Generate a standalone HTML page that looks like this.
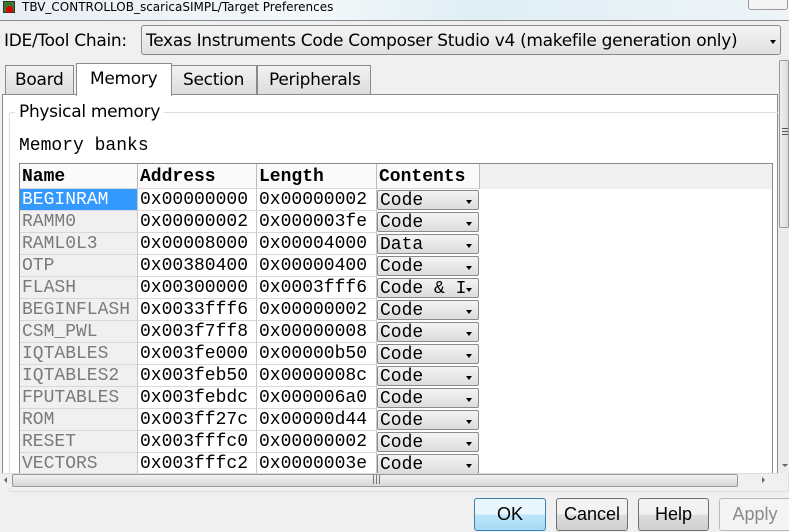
<!DOCTYPE html>
<html><head><meta charset="utf-8"><style>
*{margin:0;padding:0;box-sizing:border-box}
body{width:789px;height:532px;overflow:hidden;background:#f0f0f0;font-family:"DejaVu Sans","Liberation Sans",sans-serif;position:relative;color:#000}
.a{position:absolute}
.ui{font-size:17px;letter-spacing:-0.3px}
.mono{font-family:"Liberation Mono",monospace;font-size:18px}
.cell{position:absolute;height:22px;border-right:1px solid #c8c8c8;border-bottom:1px solid #d8d8d8;padding-left:2px;line-height:23px;white-space:nowrap;overflow:hidden}
.dd{position:absolute;height:20px;width:102px;border:1px solid #8a8a8a;border-radius:2px;background:linear-gradient(#f4f4f4,#dcdcdc);padding-left:2px;line-height:20px;font-family:"Liberation Mono",monospace;font-size:18px;white-space:nowrap;overflow:hidden}
.dd:after{content:"";position:absolute;right:6px;top:9px;border-left:3.5px solid transparent;border-right:3.5px solid transparent;border-top:4px solid #000}
.btn{position:absolute;top:498px;height:33px;border:1px solid #707070;border-radius:3px;background:linear-gradient(#f2f2f2 50%,#dddddd 50%,#cfcfcf);text-align:center;line-height:31px;font-size:18px;font-family:"Liberation Sans",sans-serif}
</style></head><body>
<div class="a" style="left:0;top:0;width:789px;height:20px;background:linear-gradient(90deg,#e8eef4,#f4f8fa 40%,#dfeef4 60%,#eef4f8);"></div>
<div class="a" style="left:3px;top:1px;width:12px;height:12px;background:#3a7a2a;border:1px solid #333"><div class="a" style="left:2px;top:4px;width:7px;height:7px;border-radius:50%;background:#d00"></div></div>
<div class="a" style="left:22px;top:0;font-size:12px;font-family:'DejaVu Sans',sans-serif;line-height:14px">TBV_CONTROLLOB_scaricaSIMPL/Target Preferences</div>
<div class="a" style="left:748px;top:-4px;width:40px;height:14px;border:1px solid #999;border-radius:3px;background:#f4f4f4"></div>
<div class="a" style="left:0;top:20px;width:789px;height:1px;background:#8a8a8a"></div>
<div class="a ui" style="left:4px;top:31px">IDE/Tool Chain:</div>
<div class="a" style="left:141px;top:25px;width:640px;height:30px;border:1px solid #8a8a8a;border-radius:3px;background:linear-gradient(#f5f5f5,#e0e0e0)"></div>
<div class="a ui" style="left:146px;top:31px">Texas Instruments Code Composer Studio v4 (makefile generation only)</div>
<div class="a" style="left:770px;top:40px;border-left:3px solid transparent;border-right:3px solid transparent;border-top:4px solid #000"></div>
<div class="a" style="left:5px;top:65px;width:69px;height:30px;border:1px solid #8a8a8a;border-bottom:none;background:linear-gradient(#f2f2f2,#dcdcdc)"></div>
<div class="a ui" style="left:15px;top:70px">Board</div>
<div class="a" style="left:257px;top:65px;width:114px;height:30px;border:1px solid #8a8a8a;border-bottom:none;background:linear-gradient(#f2f2f2,#dcdcdc)"></div>
<div class="a" style="left:171px;top:65px;width:86px;height:30px;border:1px solid #8a8a8a;border-bottom:none;background:linear-gradient(#f2f2f2,#dcdcdc)"></div>
<div class="a ui" style="left:183px;top:70px">Section</div>
<div class="a ui" style="left:269px;top:70px">Peripherals</div>
<div class="a" style="left:2px;top:94px;width:776px;height:380px;border:1px solid #8a8a8a;background:#fff"></div>
<div class="a" style="left:76px;top:63px;width:96px;height:33px;border:1px solid #8a8a8a;border-bottom:none;background:#fff"></div>
<div class="a ui" style="left:90px;top:69px">Memory</div>
<div class="a" style="left:9px;top:112px;width:780px;height:380px;border:1px solid #d5dfe5;border-radius:3px"></div>
<div class="a ui" style="left:15px;top:102px;background:#fff;padding:0 4px">Physical memory</div>
<div class="a mono" style="left:19px;top:136px">Memory banks</div>
<div class="a" style="left:19px;top:163px;width:754px;height:310px;border:1px solid #8a8a8a;border-bottom:none;background:#fff;overflow:hidden">
<div class="a" style="left:0;top:0;width:754px;height:25px;background:#f0f0f0"></div>
<div id="t"></div>
</div>
<script>
var h=[["Name",0,118],["Address",118,119],["Length",237,120],["Contents",357,103]];
var s='';
h.forEach(function(c){s+='<div class="cell mono" style="left:'+c[1]+'px;top:0;width:'+c[2]+'px;height:25px;line-height:26px;font-weight:bold;background:#fafafa;border-right:1px solid #bbb">'+c[0]+'</div>';});
var r=[["BEGINRAM","0x00000000","0x00000002","Code"],["RAMM0","0x00000002","0x000003fe","Code"],["RAML0L3","0x00008000","0x00004000","Data"],["OTP","0x00380400","0x00000400","Code"],["FLASH","0x00300000","0x0003fff6","Code &amp; I"],["BEGINFLASH","0x0033fff6","0x00000002","Code"],["CSM_PWL","0x003f7ff8","0x00000008","Code"],["IQTABLES","0x003fe000","0x00000b50","Code"],["IQTABLES2","0x003feb50","0x0000008c","Code"],["FPUTABLES","0x003febdc","0x000006a0","Code"],["ROM","0x003ff27c","0x00000d44","Code"],["RESET","0x003fffc0","0x00000002","Code"],["VECTORS","0x003fffc2","0x0000003e","Code"]];
r.forEach(function(x,i){var t=25+22*i;
s+='<div class="cell mono" style="left:0;top:'+t+'px;width:118px;color:'+(i==0?'#fff':'#7a7a7a')+';background:'+(i==0?'#3399ff':'#f0f0f0')+'">'+x[0]+'</div>';
s+='<div class="cell mono" style="left:118px;top:'+t+'px;width:119px">'+x[1]+'</div>';
s+='<div class="cell mono" style="left:237px;top:'+t+'px;width:120px">'+x[2]+'</div>';
s+='<div class="dd" style="left:357px;top:'+(t+1)+'px">'+x[3]+'</div>';});
document.getElementById('t').innerHTML=s;
</script>
<div class="a" style="left:0;top:473px;width:778px;height:15px;background:#f0f0f0;border-top:1px solid #ddd"></div>
<div class="a" style="left:12px;top:474px;width:726px;height:13px;border:1px solid #999;border-radius:2px;background:linear-gradient(#f2f2f2,#d6d6d6)"></div>
<div class="a" style="left:372px;top:475px;font-size:9px;color:#555">|||</div>
<div class="a" style="left:4px;top:477px;border-top:3px solid transparent;border-bottom:3px solid transparent;border-right:3px solid #666"></div>
<div class="a" style="left:762px;top:477px;border-top:3px solid transparent;border-bottom:3px solid transparent;border-left:3px solid #666"></div>
<div class="a" style="left:778px;top:56px;width:11px;height:417px;background:#ececec"></div>
<div class="a" style="left:779px;top:60px;width:10px;height:168px;border:1px solid #999;border-radius:2px;background:linear-gradient(90deg,#f0f0f0,#dadada)"></div>
<div class="a" style="left:782px;top:128px;width:6px;height:7px;border-top:1px solid #555;border-bottom:1px solid #555"><div style="margin-top:2px;height:1px;background:#555"></div></div>
<div class="a" style="left:782px;top:464px;border-left:3px solid transparent;border-right:3px solid transparent;border-top:3px solid #666"></div>
<div class="btn" style="left:474px;width:72px;border-color:#3c7fb1;background:linear-gradient(#eaf6fd 50%,#bee6fd 50%,#a7d9f5)">OK</div>
<div class="btn" style="left:556px;width:72px">Cancel</div>
<div class="btn" style="left:638px;width:71px">Help</div>
<div class="btn" style="left:719px;width:72px;color:#8a8a8a;border-color:#bbb;background:#f4f4f4">Apply</div>
</body></html>
